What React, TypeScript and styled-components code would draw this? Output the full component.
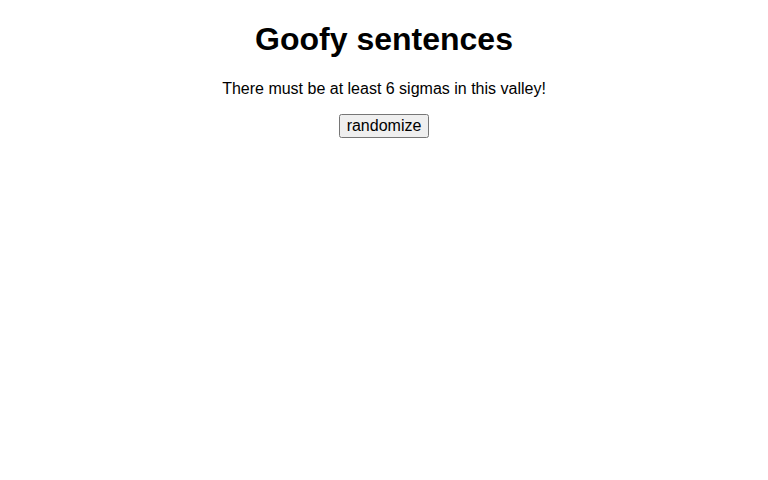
import React, { useState } from 'react';
import styled, { createGlobalStyle } from 'styled-components';

const sentences = [
	'There must be at least 6 sigmas in this valley!',
	'The toaster has filed for emotional damages.',
	'My goldfish runs a small crypto exchange.',
	'Never trust a pigeon wearing a tiny hat.',
];

const GlobalStyle = createGlobalStyle`
	body {
		margin: 0;
		background: #ffffff;
		color: #000000;
		font-family: 'Liberation Sans', Arial, sans-serif;
	}
`;

const App = () => {
	const [index, setIndex] = useState(0);

	const handleRandomize = () => {
		let next = Math.floor(Math.random() * sentences.length);
		if (next === index) next = (next + 1) % sentences.length;
		setIndex(next);
	};

	return (
		<>
			<GlobalStyle />
			<Wrapper>
				<Title>Goofy sentences</Title>
				<Sentence>{sentences[index]}</Sentence>
				<ButtonRow>
					<RandomButton onClick={handleRandomize}>randomize</RandomButton>
				</ButtonRow>
			</Wrapper>
		</>
	);
};

export default App;

const Wrapper = styled.div`
	text-align: center;
`;

const Title = styled.h1`
	font-size: 32px;
	font-weight: bold;
	margin: 21.44px 0;
`;

const Sentence = styled.p`
	font-size: 16px;
	margin: 16px 0;
`;

const ButtonRow = styled.div`
	margin: 16px 0;
`;

const RandomButton = styled.button`
	font-family: 'Liberation Sans', Arial, sans-serif;
	font-size: 16px;
`;
